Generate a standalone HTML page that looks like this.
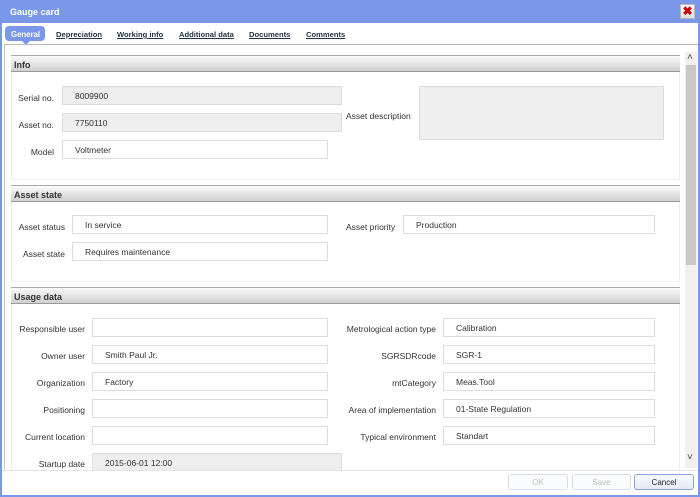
<!DOCTYPE html>
<html><head><style>
*{box-sizing:border-box;margin:0;padding:0}
body{width:700px;height:497px;overflow:hidden;background:#fff;font-family:"Liberation Sans",Arial,sans-serif;font-size:9px;color:#333;position:relative}
.a{position:absolute}
.win{left:0;top:0;width:700px;height:497px;border:2px solid #7b97ea;border-top:none}
.title{left:0;top:0;width:700px;height:23px;background:#7b97ea;color:#fff;font-weight:bold;font-size:9px;padding:7px 10px}
.close{left:680px;top:4px;width:15px;height:15px;background:linear-gradient(#fff,#ddd);border:1px solid #bbb;color:#c00;font-weight:bold;font-size:12px;line-height:12px;text-align:center}
.tab{top:30px;font-size:7.6px;font-weight:bold;color:#234;text-decoration:underline}
.gen{left:5px;top:26px;width:40px;height:15px;background:#7b97ea;border-radius:4px;color:#fff;font-weight:bold;font-size:7.8px;padding:4px 0 0 6px}
.box{border:1px solid #eee;background:#fff}
.hd{height:17px;background:linear-gradient(#fafafa,#d0d0d0);border-top:1px solid #aaa;border-bottom:1px solid #999;font-weight:bold;font-size:9px;padding:4px 3px;color:#333}
.in{height:19px;border:1px solid #ddd;background:#fff;padding:4px 12px;font-size:8.5px}
.ro{background:#eee}
.lb{font-size:8.5px;text-align:right}
.btn{top:474px;height:16px;border:1px solid #d7dfee;border-radius:3px;text-align:center;font-size:8px;padding-top:3px;color:#bbb;background:#fbfcfe}
</style></head><body>
<div class="a win"></div>
<div class="a title">Gauge card</div>
<div class="a close">✖</div>
<div class="a gen">General</div>
<div class="a" style="left:22px;top:41px;width:0;height:0;border:4px solid transparent;border-top-color:#7b97ea"></div>
<div class="a tab" style="left:56px">Depreciation</div>
<div class="a tab" style="left:117px">Working info</div>
<div class="a tab" style="left:179px">Additional data</div>
<div class="a tab" style="left:249px">Documents</div>
<div class="a tab" style="left:306px">Comments</div>
<div class="a" style="left:4px;top:44px;width:694px;height:1px;background:#bbb"></div>
<div class="a" style="left:4px;top:45px;width:1px;height:425px;background:#ccc"></div>
<div class="a" style="left:685px;top:52px;width:12px;height:416px;background:#f0f0f0"></div>
<div class="a" style="left:686px;top:65px;width:10px;height:200px;background:#c8c8c8"></div>
<div class="a" style="left:687px;top:52px;font-size:10px;color:#444">˄</div>
<div class="a" style="left:687px;top:452px;font-size:10px;color:#444">˅</div>

<div class="a box" style="left:11px;top:55px;width:669px;height:125px"></div>
<div class="a hd" style="left:11px;top:55px;width:669px">Info</div>
<div class="a lb" style="left:10px;top:93px;width:44px">Serial no.</div>
<div class="a in ro" style="left:62px;top:86px;width:280px">8009900</div>
<div class="a lb" style="left:10px;top:120px;width:44px">Asset no.</div>
<div class="a in ro" style="left:62px;top:113px;width:280px">7750110</div>
<div class="a lb" style="left:10px;top:147px;width:44px">Model</div>
<div class="a in" style="left:62px;top:140px;width:266px">Voltmeter</div>
<div class="a lb" style="left:346px;top:111px;text-align:left">Asset description</div>
<div class="a in ro" style="left:419px;top:86px;width:245px;height:54px"></div>

<div class="a box" style="left:11px;top:185px;width:669px;height:97px"></div>
<div class="a hd" style="left:11px;top:185px;width:669px">Asset state</div>
<div class="a lb" style="left:10px;top:222px;width:55px">Asset status</div>
<div class="a in" style="left:72px;top:215px;width:256px">In service</div>
<div class="a lb" style="left:10px;top:249px;width:55px">Asset state</div>
<div class="a in" style="left:72px;top:242px;width:256px">Requires maintenance</div>
<div class="a lb" style="left:346px;top:222px;text-align:left">Asset priority</div>
<div class="a in" style="left:403px;top:215px;width:252px">Production</div>

<div class="a box" style="left:11px;top:287px;width:669px;height:190px"></div>
<div class="a hd" style="left:11px;top:287px;width:669px">Usage data</div>

<div class="a lb" style="left:5px;top:324px;width:80px">Responsible user</div>
<div class="a in" style="left:92px;top:318px;width:236px"></div>
<div class="a lb" style="left:5px;top:351px;width:80px">Owner user</div>
<div class="a in" style="left:92px;top:345px;width:236px">Smith Paul Jr.</div>
<div class="a lb" style="left:5px;top:378px;width:80px">Organization</div>
<div class="a in" style="left:92px;top:372px;width:236px">Factory</div>
<div class="a lb" style="left:5px;top:405px;width:80px">Positioning</div>
<div class="a in" style="left:92px;top:399px;width:236px"></div>
<div class="a lb" style="left:5px;top:432px;width:80px">Current location</div>
<div class="a in" style="left:92px;top:426px;width:236px"></div>
<div class="a lb" style="left:5px;top:459px;width:80px">Startup date</div>
<div class="a in ro" style="left:92px;top:453px;width:250px">2015-06-01 12:00</div>

<div class="a lb" style="left:326px;top:324px;width:110px">Metrological action type</div>
<div class="a in" style="left:443px;top:318px;width:212px">Calibration</div>
<div class="a lb" style="left:326px;top:351px;width:110px">SGRSDRcode</div>
<div class="a in" style="left:443px;top:345px;width:212px">SGR-1</div>
<div class="a lb" style="left:326px;top:378px;width:110px">mtCategory</div>
<div class="a in" style="left:443px;top:372px;width:212px">Meas.Tool</div>
<div class="a lb" style="left:326px;top:405px;width:110px">Area of implementation</div>
<div class="a in" style="left:443px;top:399px;width:212px">01-State Regulation</div>
<div class="a lb" style="left:326px;top:432px;width:110px">Typical environment</div>
<div class="a in" style="left:443px;top:426px;width:212px">Standart</div>

<div class="a" style="left:2px;top:470px;width:696px;height:25px;background:#fff;border-top:1px solid #e4e4e4"></div>
<div class="a btn" style="left:508px;width:60px">OK</div>
<div class="a btn" style="left:572px;width:59px">Save</div>
<div class="a btn" style="left:634px;width:60px;color:#222;border-color:#8fa4d0;background:linear-gradient(#f8faff,#e4eaf6)">Cancel</div>
</body></html>
